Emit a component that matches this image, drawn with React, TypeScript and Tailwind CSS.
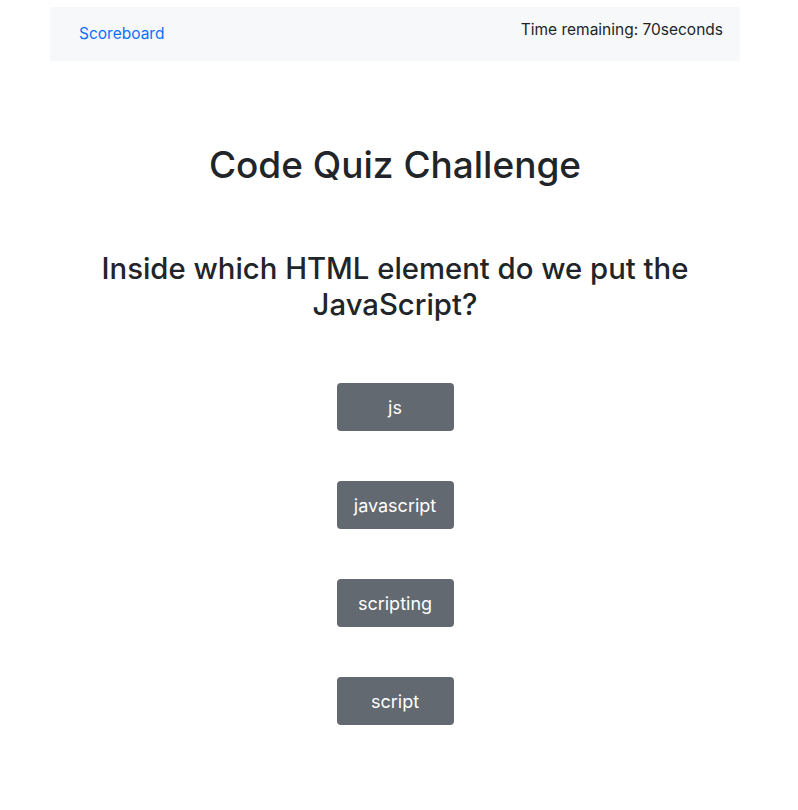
const answers = ['js', 'javascript', 'scripting', 'script'];

export default function App() {
  return (
    <div className="min-h-[810px] bg-white text-[#212529]" style={{ fontFamily: 'Inter, "Noto Sans", sans-serif' }}>
      <div className="ml-[50px] w-[690px] pt-[7px]">
        <nav className="flex h-[54px] items-start justify-between bg-[#f7f8f9] pl-[29px] pr-[17px]">
          <a href="#" className="mt-[16px] text-[15.5px] leading-[22px] text-[#0d6efd]">Scoreboard</a>
          <span className="mt-[12px] text-[15.5px] leading-[22px]">Time remaining: 70seconds</span>
        </nav>

        <h1 className="mt-[80px] text-center text-[37px] leading-[48px] font-medium">Code Quiz Challenge</h1>

        <h2 className="mt-[62px] px-[40px] text-center text-[29.3px] leading-[36px] font-medium">
          Inside which HTML element do we put the JavaScript?
        </h2>

        <div className="mt-[60px] flex flex-col items-center gap-[50px]">
          {answers.map((a) => (
            <button
              key={a}
              className="h-[48px] w-[117px] rounded-[4px] bg-[#626970] text-[18px] text-white"
            >
              {a}
            </button>
          ))}
        </div>
      </div>
    </div>
  );
}
